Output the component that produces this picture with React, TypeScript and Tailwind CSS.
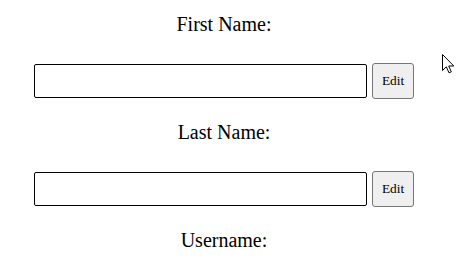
const fields = ["First Name:", "Last Name:", "Username:"]

function Field({ label }: { label: string }) {
	return (
		<div className="flex flex-col items-center">
			<label className="h-6 leading-6 text-[20px] text-black">{label}</label>
			<div className="mt-[27px] mb-[21px] flex h-9 items-center gap-[5px]">
				<input
					type="text"
					className="h-[34px] w-[333px] rounded-[2px] border border-black bg-white px-1 outline-none"
				/>
				<button className="h-9 w-[42px] rounded-[3px] border border-[#767676] bg-[#efefef] text-[13.33px] text-black">
					Edit
				</button>
			</div>
		</div>
	)
}

export default function App() {
	return (
		<div
			className="relative h-[262px] w-[464px] overflow-hidden bg-white pt-[12px]"
			style={{ fontFamily: '"Liberation Serif", "Times New Roman", serif' }}
		>
			<div className="flex w-[448px] flex-col items-center">
				{fields.map((f) => (
					<Field key={f} label={f} />
				))}
			</div>
			<svg
				className="absolute left-[442px] top-[54px]"
				width="13"
				height="20"
				viewBox="0 0 13 20"
			>
				<path
					d="M0.5 0.5 L0.5 16.5 L4.3 12.8 L7 18.8 L9.3 17.8 L6.7 12 L11.8 12 Z"
					fill="white"
					stroke="black"
					strokeWidth="1"
					strokeLinejoin="miter"
				/>
			</svg>
		</div>
	)
}
